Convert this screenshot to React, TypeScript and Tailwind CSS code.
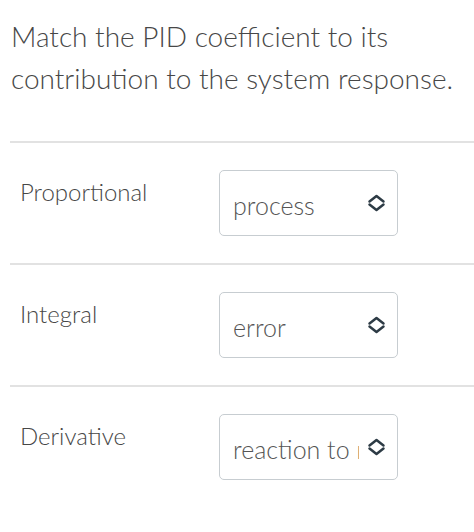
import React from 'react';

type Row = { label: string; value: string };

const rows: Row[] = [
    { label: 'Proportional', value: 'process' },
    { label: 'Integral', value: 'error' },
    { label: 'Derivative', value: 'reaction to rate of change' },
];

const UpDown = () => (
    <svg width="19" height="18" viewBox="0 0 19 18" fill="none" className="ml-[8px] shrink-0">
        <path d="M2.5 7.5 L9.5 2 L16.5 7.5" stroke="#2d3b45" strokeWidth="2.5" strokeLinecap="round" strokeLinejoin="round" />
        <path d="M2.5 10.5 L9.5 16 L16.5 10.5" stroke="#2d3b45" strokeWidth="2.5" strokeLinecap="round" strokeLinejoin="round" />
    </svg>
);

const App = () => {
    return (
        <div className="min-h-[532px] bg-white pt-[15px] font-['Lato','Liberation_Sans',sans-serif]">
            {/* Question text */}
            <p className="pl-[11px] pr-2 text-[28px] leading-[42px] font-light text-[#474747]">
                Match the PID coefficient to its contribution to the system response.
            </p>

            {/* Matching rows */}
            <div className="ml-[10px] mt-[42px]">
                {rows.map((row) => (
                    <div key={row.label} className="flex items-start border-t-2 border-[#e2e2e2] pt-[27px] pb-[27px]">
                        <div className="w-[209px] pl-[10px] pt-[7px] text-[24px] leading-[30px] font-light text-[#474747]">
                            {row.label}
                        </div>
                        <div className="flex h-[66px] w-[179px] items-center rounded-[5px] border border-[#c7cdd1] pl-[13px] pr-[11px]">
                            <span className="min-w-0 flex-1 overflow-hidden whitespace-nowrap pt-[6px] text-[25px] font-light text-[#555]">
                                {row.value}
                            </span>
                            <UpDown />
                        </div>
                    </div>
                ))}
            </div>
        </div>
    );
};

export default App;
